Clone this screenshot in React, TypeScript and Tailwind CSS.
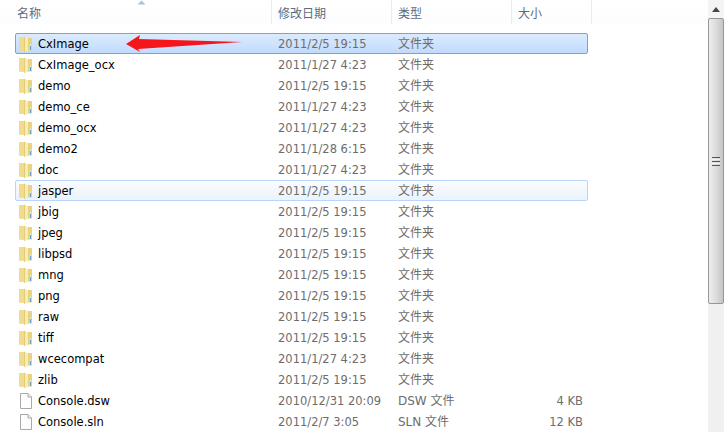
const folders: [string, string][] = [
  ["CxImage", "2011/2/5 19:15"],
  ["CxImage_ocx", "2011/1/27 4:23"],
  ["demo", "2011/2/5 19:15"],
  ["demo_ce", "2011/1/27 4:23"],
  ["demo_ocx", "2011/1/27 4:23"],
  ["demo2", "2011/1/28 6:15"],
  ["doc", "2011/1/27 4:23"],
  ["jasper", "2011/2/5 19:15"],
  ["jbig", "2011/2/5 19:15"],
  ["jpeg", "2011/2/5 19:15"],
  ["libpsd", "2011/2/5 19:15"],
  ["mng", "2011/2/5 19:15"],
  ["png", "2011/2/5 19:15"],
  ["raw", "2011/2/5 19:15"],
  ["tiff", "2011/2/5 19:15"],
  ["wcecompat", "2011/1/27 4:23"],
  ["zlib", "2011/2/5 19:15"],
];

function FolderIcon() {
  return (
    <svg width="16" height="16" viewBox="0 0 16 16" className="shrink-0">
      <path d="M1.5 1 H6 L7 2 H13.5 L14 2.5 V14.5 H1.5 L1 14 V1.5 Z" fill="#ead27f" />
      <path d="M1 1.5 L1.5 1 H6.5 V15 L1.5 14.5 L1 14 Z" fill="#f0dc90" />
      <path d="M6.5 0.8 L10.5 2.5 V14.5 L6.5 16 Z" fill="#f8edae" />
      <path d="M6.5 0.8 V16" stroke="#dcc270" strokeWidth="0.7" />
      <path d="M10.5 2.5 V14.5" stroke="#dcc270" strokeWidth="0.5" />
      <rect x="12" y="10" width="1" height="4" fill="#5aa6d8" />
      <rect x="12" y="8.5" width="1" height="1.5" fill="#f7f3d6" />
    </svg>
  );
}

function FileIcon() {
  return (
    <svg width="16" height="16" viewBox="0 0 16 16" className="shrink-0">
      <path d="M2.5 0.5 H10 L13.5 4 V15.5 H2.5 Z" fill="#fdfdfd" stroke="#a9a9a9" />
      <path d="M10 0.5 V4 H13.5" fill="#f0f0f0" stroke="#a9a9a9" />
    </svg>
  );
}

type RowProps = {
  name: string;
  date: string;
  kind: string;
  size?: string;
  icon: React.ReactNode;
  variant?: "selected" | "hover";
  arrow?: boolean;
};

function Row({ name, date, kind, size, icon, variant, arrow }: RowProps) {
  const skin =
    variant === "selected"
      ? "border-[#7da2ce] bg-gradient-to-b from-[#dcebfc] to-[#c1dbfc]"
      : variant === "hover"
        ? "border-[#b8d6fb] bg-gradient-to-b from-[#fafbfd] to-[#ebf3fd]"
        : "border-transparent";
  return (
    <div className={`relative flex h-[21px] w-[573px] items-center rounded-[2px] border text-[11.5px] ${skin}`}>
      <div className="flex w-[262px] items-center pl-[2px]">
        {icon}
        <span className="ml-[4px] pt-[2px] text-[#000000]">{name}</span>
      </div>
      <span className="w-[120px] pt-[2px] text-[#6d6d6d]">{date}</span>
      <span className="w-[100px] text-[12px] text-[#6d6d6d]">{kind}</span>
      <span className="w-[85px] pt-[2px] text-right text-[#6d6d6d]">{size}</span>
      {arrow && (
        <svg width="118" height="19" viewBox="0 0 118 19" className="absolute left-[110px] top-0">
          <path d="M0 10 L14 1 L13 5 L116 8 L12 15 L14 18 Z" fill="#f5161c" />
        </svg>
      )}
    </div>
  );
}

function HeaderCell({ label, width }: { label: string; width: string }) {
  return (
    <div className={`flex h-[24px] items-center border-r border-[#e9edf2] pl-[6px] pt-[3px] text-[12px] text-[#5a6c84] ${width}`}>
      {label}
    </div>
  );
}

export default function App() {
  return (
    <div
      className="flex h-[432px] w-[724px] overflow-hidden bg-white"
      style={{ fontFamily: '"DejaVu Sans", "Noto Sans CJK SC", sans-serif' }}
    >
      <div className="flex w-[708px] flex-col">
        <div className="relative flex h-[24px] bg-gradient-to-b from-white to-[#fcfdfe] pl-[11px]">
          <HeaderCell label="名称" width="w-[261px]" />
          <HeaderCell label="修改日期" width="w-[120px]" />
          <HeaderCell label="类型" width="w-[120px]" />
          <HeaderCell label="大小" width="w-[80px]" />
          <svg width="9" height="5" viewBox="0 0 9 5" className="absolute left-[137px] top-0">
            <path d="M0.5 4.5 L4.5 0.5 L8.5 4.5 Z" fill="#a9c3d8" />
          </svg>
        </div>
        <div className="flex flex-col pl-[15px] pt-[9px]">
          {folders.map(([name, date], i) => (
            <Row
              key={name}
              name={name}
              date={date}
              kind="文件夹"
              icon={<FolderIcon />}
              variant={i === 0 ? "selected" : i === 7 ? "hover" : undefined}
              arrow={i === 0}
            />
          ))}
          <Row name="Console.dsw" date="2010/12/31 20:09" kind="DSW 文件" size="4 KB" icon={<FileIcon />} />
          <Row name="Console.sln" date="2011/2/7 3:05" kind="SLN 文件" size="12 KB" icon={<FileIcon />} />
        </div>
      </div>
      <div className="flex w-[16px] flex-col bg-[#f0f0f0]">
        <div className="flex h-[18px] items-center justify-center bg-[#f4f4f4]">
          <svg width="8" height="5" viewBox="0 0 8 5">
            <path d="M0 5 L4 0 L8 5 Z" fill="#3f4a52" />
          </svg>
        </div>
        <div className="flex h-[286px] items-center justify-center rounded-[2px] border border-[#979797] bg-gradient-to-r from-[#eeeeee] via-[#dcdcdc] to-[#c6c6c6]">
          <div className="flex w-[8px] flex-col gap-[1px]">
            <div className="h-[1px] bg-[#555555]" />
            <div className="h-[1px] bg-[#f2f2f2]" />
            <div className="h-[1px] bg-[#555555]" />
            <div className="h-[1px] bg-[#f2f2f2]" />
            <div className="h-[1px] bg-[#555555]" />
          </div>
        </div>
      </div>
    </div>
  );
}
